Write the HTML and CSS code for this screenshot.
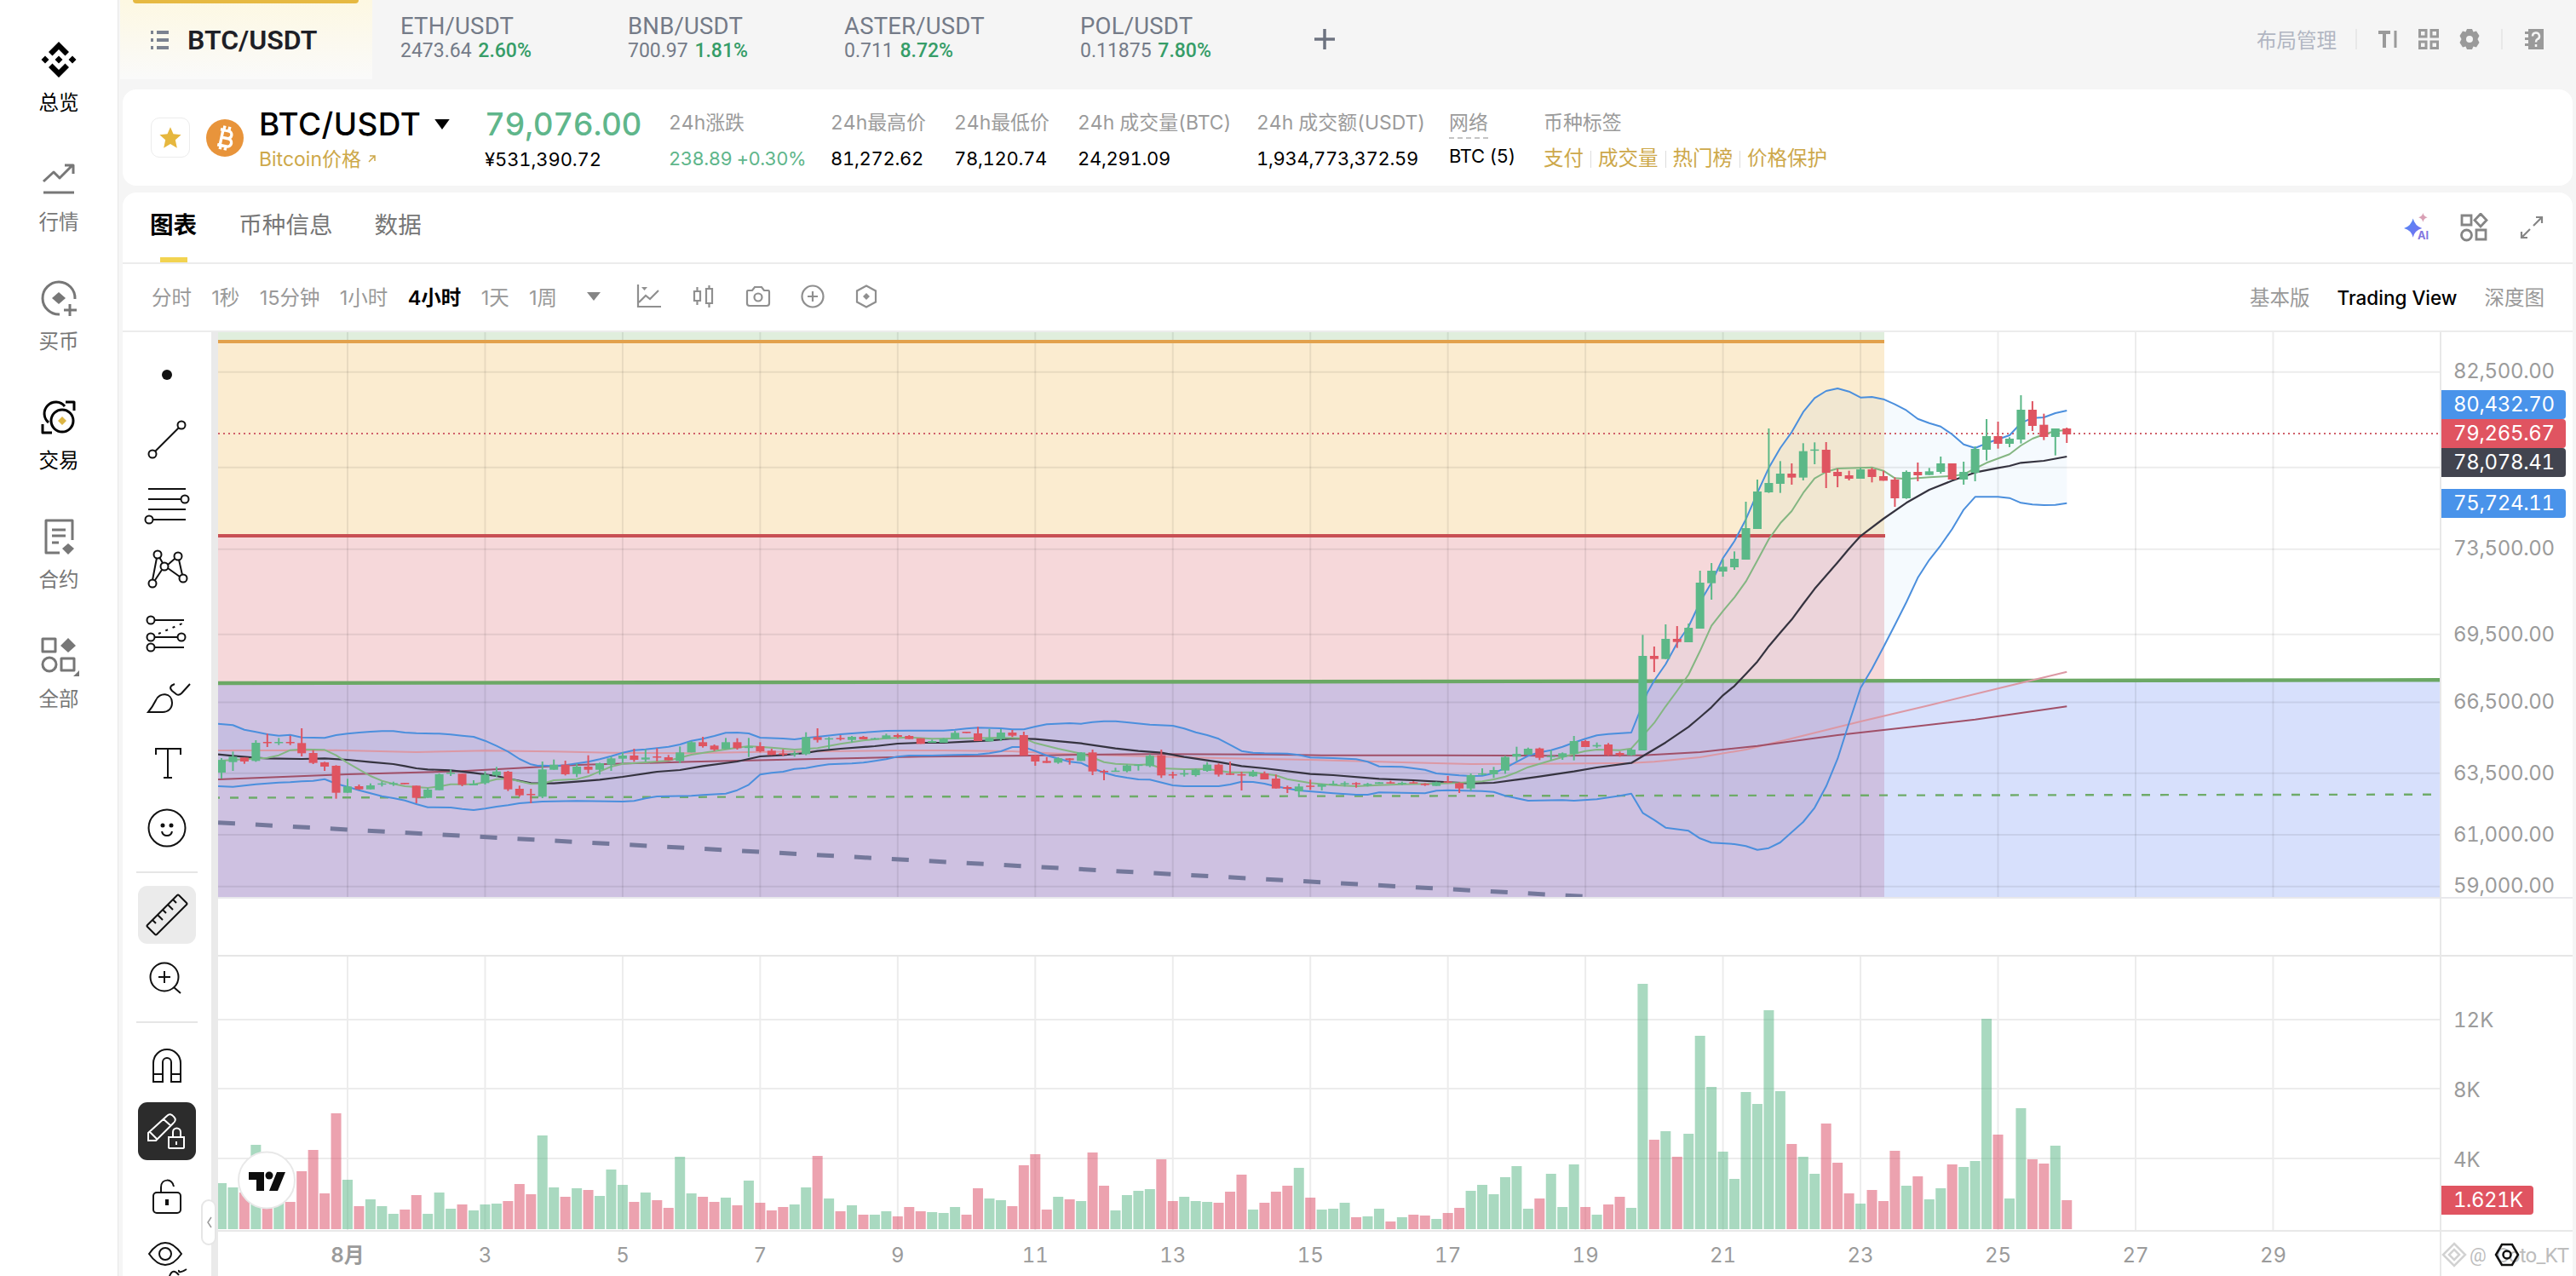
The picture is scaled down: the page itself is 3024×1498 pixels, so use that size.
FILE: index.html
```html
<!DOCTYPE html>
<html lang="zh-CN">
<head>
    <meta charset="UTF-8">
    <meta name="viewport" content="width=device-width, initial-scale=1.0">
    <title>BTC/USDT</title>
    <link rel="stylesheet" href="styles.css">
</head>
<body>
    <nav class="side-nav">
        <a class="nav-item active">
            <svg class="nav-icon" viewBox="-24 -24 48 48"><g fill="currentColor"><path d="M0-21 12-9 7.500-4.500 0-12-7.500-4.500-12-9zM0 21 12 9 7.500 4.500 0 12-7.500 4.500-12 9zM0-4.500 4.500 0 0 4.500-4.500 0zM-16-4.500-11.500 0-16 4.500-20.500 0zM16-4.500 20.500 0 16 4.500 11.500 0z"/></g></svg>
            <span>总览</span>
        </a>
        <a class="nav-item">
            <svg class="nav-icon" viewBox="-24 -24 48 48"><path class="ln" d="M-18 3-6-8 1-1 16-16M7-16H17V-6M-18 16H18"/></svg>
            <span>行情</span>
        </a>
        <a class="nav-item">
            <svg class="nav-icon" viewBox="-24 -24 48 48"><path class="ln" d="M1 19A19 19 0 1 1 19 1M13 7V21M6 14H21"/><path fill="currentColor" d="M0-7 8 0 0 7-8 0z"/></svg>
            <span>买币</span>
        </a>
        <a class="nav-item active">
            <svg class="nav-icon" viewBox="-24 -24 48 48"><path class="ln" d="M-12 6A13.500 13.500 0 1 1 7-13M8-18H18V-8M-19 8V18H-8"/><circle class="ln" cx="4" cy="4" r="13"/><path fill="#dcb544" d="M4-1 9 4 4 9-1 4z"/></svg>
            <span>交易</span>
        </a>
        <a class="nav-item">
            <svg class="nav-icon" viewBox="-24 -24 48 48"><path class="ln" d="M1 19H-15V-19H16V4M-8-8H8M-8-1H8M-8 7H0"/><path fill="currentColor" d="M11 8 18 14 11 21 4 14z"/></svg>
            <span>合约</span>
        </a>
        <a class="nav-item">
            <svg class="nav-icon" viewBox="-24 -24 48 48"><path class="ln" d="M-19-20H-4V-5H-19zM3 3H18V17H3z"/><circle class="ln" cx="-11" cy="10" r="8"/><path fill="currentColor" d="M11-21 20-12 11-4 2-12zM24 17V24H17z"/></svg>
            <span>全部</span>
        </a>
    </nav>

    <main class="main">
        <header class="top-tabs">
            <div class="top-tab current">
                <svg width="24" height="24" viewBox="0 0 24 24" fill="#7b8290"><path d="M1 1h3v4H1zM8 1h14v4H8zM1 10h3v4H1zM8 10h14v4H8zM1 19h3v4H1zM8 19h14v4H8z"/></svg>
                <b>BTC/USDT</b>
            </div>
            <div class="top-tab"><p>ETH/USDT</p><small>2473.64 <i>2.60%</i></small></div>
            <div class="top-tab"><p>BNB/USDT</p><small>700.97 <i>1.81%</i></small></div>
            <div class="top-tab"><p>ASTER/USDT</p><small>0.711 <i>8.72%</i></small></div>
            <div class="top-tab"><p>POL/USDT</p><small>0.11875 <i>7.80%</i></small></div>
            <div class="top-tab plus"><svg width="24" height="24" viewBox="0 0 24 24"><path d="M12 0V24M0 12H24" stroke="#6d7380" stroke-width="3.500"/></svg></div>
            <div class="top-tools">
                <span>布局管理</span>
                <i class="sep"></i>
                <svg class="tool-ti" width="22" height="24" viewBox="0 0 22 24"><path d="M0 4H14M7 4V22" stroke="#9a9a9a" stroke-width="4" fill="none"/><path d="M20 2V22" stroke="#9a9a9a" stroke-width="3"/></svg>
                <svg class="tool-grid" width="24" height="24" viewBox="0 0 24 24"><path d="M1.500 1.500h7.500v7.500h-7.500zM15 1.500h7.500v7.500H15zM1.500 15h7.500v7.500h-7.500zM15 15h7.500v7.500H15z" stroke="#9a9a9a" stroke-width="3" fill="none"/></svg>
                <svg class="tool-gear" width="24" height="24" viewBox="-12 -12 24 24"><path fill="#9a9a9a" fill-rule="evenodd" d="M-3-12H3L4.500-8.500 8-9.500 11.500-4 9.500 0 11.500 4 8 9.500 4.500 8.500 3 12H-3L-4.500 8.500-8 9.500-11.500 4-9.500 0-11.500-4-8-9.500-4.500-8.500zM0-4A4 4 0 1 0 0 4 4 4 0 0 0 0-4z"/></svg>
                <i class="sep last-sep"></i>
                <svg class="tool-help" width="22" height="24" viewBox="0 0 22 24"><path fill="#9a9a9a" d="M4 0H22V24H4zM0 3H8V6H0zM0 10H8V13H0zM0 17H8V20H0z"/><path d="M9 8.500a4 4 0 1 1 5.500 3.700q-1.500.8-1.500 3.300M13 18V21" fill="none" stroke="#f5f5f5" stroke-width="2.500"/></svg>
            </div>
        </header>

        <section class="card ticker">
            <div class="star"><svg width="28" height="28" viewBox="0 0 24 24"><path fill="#e6b73e" d="M12 1l3 7 7.800.8-5.800 5.200 1.700 8L12 18l-6.700 4 1.700-8L1.200 8.800 9 8z"/></svg></div>
            <svg class="coin" width="44" height="44" viewBox="-22 -22 44 44"><circle r="22" fill="#e8943b"/><g transform="rotate(12)" fill="none" stroke="#fff" stroke-width="3.400"><path d="M-7-9H2.500a4.500 4.500 0 0 1 0 9H-4H4a4.700 4.700 0 0 1 0 9.400H-7M-4-9V9M-3-14V-9M3-14V-9M-3 9V14M3 9V14"/></g></svg>
            <div class="pair">
                <h1>BTC/USDT <svg width="20" height="12" viewBox="0 0 18 11"><path d="M1 0H17L9 11z"/></svg></h1>
                <a>Bitcoin价格 <svg width="9" height="9" viewBox="0 0 9 9"><path d="M1 8 8 1M2 1H8V7" fill="none" stroke="#cda84a" stroke-width="1.500"/></svg></a>
            </div>
            <div class="last"><strong>79,076.00</strong><span>¥531,390.72</span></div>
            <dl class="stats">
                <div><dt>24h涨跌</dt><dd class="up">238.89 +0.30%</dd></div>
                <div><dt>24h最高价</dt><dd>81,272.62</dd></div>
                <div><dt>24h最低价</dt><dd>78,120.74</dd></div>
                <div><dt>24h 成交量(BTC)</dt><dd>24,291.09</dd></div>
                <div><dt>24h 成交额(USDT)</dt><dd>1,934,773,372.59</dd></div>
                <div class="network"><dt><u>网络</u></dt><dd>BTC (5)</dd></div>
                <div><dt>币种标签</dt><dd class="tags"><a>支付</a><a>成交量</a><a>热门榜</a><a>价格保护</a></dd></div>
            </dl>
        </section>

        <section class="card chart-card">
            <div class="chart-tabs">
                <a class="on">图表</a><a>币种信息</a><a>数据</a>
                <div class="chart-actions">
                    <svg width="32" height="34" viewBox="0 0 30 32"><defs><linearGradient id="ai" x2="1" y2="1"><stop offset="0" stop-color="#4f8df5"/><stop offset="1" stop-color="#7a6cf0"/></linearGradient></defs><path fill="url(#ai)" d="M10 6q2 8 10 11-8 2-10 10-2-8-10-10 8-3 10-11z"/><path fill="#d9a0b5" d="M21 0q1 4 5 5-4 1-5 5-1-4-5-5 4-1 5-5z"/><text x="15" y="29" font-size="12" font-weight="700" fill="#8277e0">AI</text></svg>
                    <svg width="34" height="34" viewBox="0 0 34 34" fill="none" stroke="#858585" stroke-width="2.800"><path d="M3 3H14V14H3zM25 1 32 8.500 25 16 18 8.500zM20 20H31V31H20z"/><circle cx="8.500" cy="26" r="6"/></svg>
                    <svg width="28" height="28" viewBox="0 0 28 28" fill="none" stroke="#858585" stroke-width="2.200"><path d="M16 12 26 2M19 2H26V9M12 16 2 26M2 19V26H9"/></svg>
                </div>
            </div>
            <div class="intervals">
                <a>分时</a><a>1秒</a><a>15分钟</a><a>1小时</a><a class="on">4小时</a><a>1天</a><a>1周</a>
                <svg width="16" height="10" viewBox="0 0 16 10"><path d="M0 0H16L8 10z" fill="#858585"/></svg>
                <div class="interval-icons">
                    <svg width="30" height="28" viewBox="0 0 30 28"><path d="M2 0V26H29M3 21 11 13 16 17 26 7"/><path d="M6 3H13L9.500 7z" fill="#8f8f8f" stroke="none"/></svg>
                    <svg width="28" height="28" viewBox="0 0 28 28"><path d="M3 8H10V19H3zM6.500 3V8M6.500 19V24M17 5H24V22H17zM20.500 1V5M20.500 22V27"/></svg>
                    <svg width="30" height="28" viewBox="0 0 30 28"><path d="M3 7H8L11 3H19L22 7H27Q28 7 28 9V22Q28 25 25 25H5Q2 25 2 22V9Q2 7 3 7z"/><circle cx="15" cy="15" r="4.500"/></svg>
                    <svg width="28" height="28" viewBox="0 0 28 28"><circle cx="14" cy="14" r="12.500"/><path d="M14 8V20M8 14H20"/></svg>
                    <svg width="28" height="28" viewBox="0 0 28 28"><path d="M14 1.500 25 7.500V20.500L14 26.500 3 20.500V7.500z"/><path d="M14 10 18 14 14 18 10 14z" fill="#8f8f8f" stroke="none"/></svg>
                </div>
                <div class="views"><a>基本版</a><a class="on">Trading View</a><a>深度图</a></div>
            </div>

            <div class="chart-body">
                <aside class="draw-tools">
                    <svg class="tool" viewBox="-38 -38 76 76"><circle r="6" fill="#111" stroke="none"/></svg>
                    <svg class="tool" viewBox="-38 -38 76 76"><path d="M-14 14 14-14"/><circle cx="-17" cy="17" r="4.500"/><circle cx="17" cy="-17" r="4.500"/></svg>
                    <svg class="tool" viewBox="-38 -38 76 76"><path d="M-22-18H22M-22-6H16M-22 6H22M-16 18H22"/><circle cx="21" cy="-6" r="4.500"/><circle cx="-21" cy="18" r="4.500"/></svg>
                    <svg class="tool" viewBox="-38 -38 76 76"><path d="M-17 13-12-13M-14 13-6 1M-9-14-5-7M1-5 9-12M1-1 15 9M14-11 18 7"/><circle cx="-11" cy="-17" r="4.500"/><circle cx="13" cy="-15" r="4.500"/><circle cx="-3" cy="-3" r="4.500"/><circle cx="-17" cy="17" r="4.500"/><circle cx="19" cy="11" r="4.500"/></svg>
                    <svg class="tool" viewBox="-38 -38 76 76"><path d="M-14-16H20M-14 4H12M-14 16H20"/><path d="M-10 0 18-12" stroke-dasharray="3 6"/><circle cx="-19" cy="-16" r="4.500"/><circle cx="-19" cy="4" r="4.500"/><circle cx="17" cy="4" r="4.500"/><circle cx="-19" cy="16" r="4.500"/></svg>
                    <svg class="tool" viewBox="-38 -38 76 76"><path d="M-22 16Q-17 10-13 2C-9-8 6-7 6 5 6 12 1 16-5 16zM9-17Q1-14 6-9L11-5Q14-3 17-6L27-17"/></svg>
                    <svg class="tool" viewBox="-38 -38 76 76"><path d="M-13-10V-17H16V-10M1-17V17M-4 17H6"/></svg>
                    <svg class="tool" viewBox="-38 -38 76 76"><circle r="21.500"/><path d="M-6 4Q-5 9 0 9 5 9 6 4"/><circle cx="-5" cy="-3" r="1.500" fill="#111"/><circle cx="5" cy="-3" r="1.500" fill="#111"/></svg>
                    <hr>
                    <div class="tool-btn ruler"><svg viewBox="-34 -34 68 68"><path d="M-23 12 12-23Q13-24 14-23L23-14Q24-13 23-12L-12 23Q-13 24-14 23L-23 14Q-24 13-23 12zM-17 6-13 10M-11 0-5 6M-5-6-1-2M1-12 7-6M7-18 11-14"/></svg></div>
                    <svg class="tool zoom" viewBox="-38 -38 76 76"><circle cx="-3" cy="-1" r="16.500"/><path d="M-10-1H4M-3-8V6M8 11 16 18"/></svg>
                    <hr>
                    <svg class="tool magnet" viewBox="-38 -38 76 76"><path d="M-16 19V-3a16 16 0 0 1 32 0V19H5V-4a5 5 0 0 0-10 0V19zM-16 10H-5M5 10H16"/></svg>
                    <div class="tool-btn dark"><svg viewBox="-34 -34 68 68"><path d="M-22 2 0-18Q4-22 8-17 12-13 7-9L-13 11H-22zM-4-14 5-6M-20 1-11 10M2 7H20V19Q20 20 18 20H4Q2 20 2 19zM7 7V1a4.500 4.500 0 0 1 9 0V7M11 12V16"/></svg></div>
                    <svg class="tool unlock" viewBox="-38 -38 76 76"><rect x="-16" y="-5" width="32" height="24" rx="4"/><path d="M-7-5V-11C-7-22 7-22 8-12"/><rect x="-1" y="4" width="2" height="5" fill="#111"/></svg>
                    <svg class="tool eye" viewBox="-38 -38 76 76"><path d="M-21-1Q-12-14-2-14 8-14 17-1 8 12-2 12-12 12-21-1z"/><circle cx="-2" cy="-1" r="7"/><path d="M3 25Q7 15 14 24M14 18Q13 23 23 17"/></svg>
                    <span class="collapse"><svg width="8" height="14" viewBox="0 0 8 14"><path d="M6 1 2 7 6 13" fill="none" stroke="#999" stroke-width="1.500"/></svg></span>
                </aside>
                <svg id="chart" viewBox="256 390 2764 1108"></svg>
            </div>
        </section>
    </main>

    <script src="script.js"></script>
</body>
</html>
```
FILE: styles.css
```css
* {
    box-sizing: border-box;
}
body {
    margin: 0;
    width: 3024px;
    height: 1498px;
    overflow: hidden;
    display: flex;
    background-color: #f5f5f5;
    font-family: Inter, "Noto Sans CJK SC", sans-serif;
    font-size: 23.5px;
    color: #000;
}
h1, p, dl, dd {
    margin: 0;
}
i {
    font-style: normal;
}
svg {
    display: block;
    flex: none;
}

/* left navigation */
.side-nav {
    width: 139px;
    flex: none;
    background-color: #fff;
    border-right: 1px solid #e8e8e8;
}
.nav-item {
    height: 140px;
    padding-top: 46px;
    display: flex;
    flex-direction: column;
    align-items: center;
    gap: 12px;
    line-height: 30px;
    color: #777;
}
.nav-item.active {
    color: #000;
}
.nav-icon {
    width: 48px;
    height: 48px;
}
.ln {
    fill: none;
    stroke: currentColor;
    stroke-width: 3;
    stroke-linejoin: round;
}

/* symbol tabs */
.main {
    flex: 1;
    min-width: 0;
    display: flex;
    flex-direction: column;
}
.top-tabs {
    height: 105px;
    padding-left: 2px;
    display: grid;
    grid-template-columns: 296px 267px 254px 277px 275px 100px 1fr;
    font-family: Roboto, "Noto Sans CJK SC", sans-serif;
    color: #747b88;
}
.top-tab {
    padding: 14px 0 0 33px;
}
.top-tab p {
    font-size: 27.5px;
    line-height: 33px;
    letter-spacing: .2px;
}
.top-tab small {
    display: block;
    font-size: 23px;
    line-height: 26px;
    word-spacing: 2px;
}
.top-tab i {
    color: #369d68;
    font-weight: 500;
}
.top-tab.current {
    position: relative;
    height: 93px;
    padding: 0 0 0 35px;
    display: flex;
    align-items: center;
    gap: 20px;
    background: linear-gradient(#fdf8e2, #fafafa);
    color: #1e2026;
}
.top-tab.current::before {
    content: "";
    position: absolute;
    top: 0;
    left: 15px;
    width: 265px;
    height: 4px;
    border-radius: 0 0 4px 4px;
    background-color: #e6b941;
}
.top-tab b {
    font-size: 32px;
    font-weight: 600;
}
.top-tab.plus {
    padding-top: 34px;
}
.top-tools {
    height: 92px;
    padding-right: 38px;
    display: flex;
    justify-content: flex-end;
    align-items: center;
    color: #b1b6c2;
}
.sep {
    width: 2px;
    height: 24px;
    margin: 0 25px 0 22px;
    background-color: #e8e8e8;
}
.last-sep {
    margin: 0 26px 0 25px;
}
.tool-grid {
    margin: 0 24px 0 25px;
}

/* ticker */
.card {
    margin-left: 5px;
    margin-right: 4px;
    background-color: #fff;
    border-radius: 16px;
}
.ticker {
    height: 113px;
    padding-left: 33px;
    display: flex;
    align-items: center;
    font-variant-numeric: tabular-nums;
}
.star {
    width: 46px;
    height: 47px;
    display: flex;
    align-items: center;
    justify-content: center;
    border: 1px solid #ececec;
    border-radius: 10px;
}
.coin {
    margin: 0 18px 0 19px;
}
.pair {
    width: 265px;
    padding-top: 4px;
}
.pair h1, .last strong {
    display: flex;
    align-items: center;
    gap: 15px;
    font-size: 37px;
    font-weight: 500;
    line-height: 46px;
}
.pair h1 {
    letter-spacing: .4px;
}
.pair a {
    display: flex;
    align-items: center;
    gap: 8px;
    line-height: 36px;
    font-size: 23px;
    color: #cda84a;
}
.last {
    width: 216px;
    padding-top: 4px;
}
.last strong {
    letter-spacing: -.4px;
    color: #5fb68b;
}
.last span {
    display: block;
    font-size: 22px;
    line-height: 36px;
    letter-spacing: -.1px;
}
.stats {
    padding-top: 6px;
    display: grid;
    grid-template-columns: 190px 145px 145px 210px 226px 111px auto;
}
.stats dt {
    line-height: 42px;
    font-size: 22.9px;
    color: #9b9b9b;
    white-space: nowrap;
}
.stats dd {
    line-height: 42px;
    font-size: 22px;
    letter-spacing: -.3px;
    white-space: nowrap;
}
.stats .up {
    color: #5fb68b;
    letter-spacing: -.5px;
}
.stats u {
    display: inline-block;
    height: 40px;
    line-height: 42px;
    text-decoration: none;
    border-bottom: 2px dashed #c4c4c4;
}
.network dt {
    height: 42px;
}
.network dd {
    margin-top: -3px;
}
.tags {
    display: flex;
    color: #cda84a;
}
.stats .tags {
    letter-spacing: 0;
}
.tags a {
    font-size: 23.5px;
}
.tags a + a::before {
    content: "";
    display: inline-block;
    width: 1px;
    height: 20px;
    margin: 0 8px;
    vertical-align: -3px;
    background-color: #ddd;
}

/* chart header */
.chart-card {
    flex: 1;
    margin-top: 8px;
    border-radius: 16px 16px 0 0;
}
.chart-tabs {
    height: 84px;
    padding: 0 34px 0 32px;
    display: flex;
    gap: 49px;
    line-height: 76px;
    font-size: 27.6px;
    color: #777;
    border-bottom: 2px solid #ececec;
}
.chart-tabs a.on {
    position: relative;
    font-weight: 600;
    color: #000;
}
.chart-tabs a.on::after {
    content: "";
    position: absolute;
    left: 12px;
    bottom: 0;
    width: 32px;
    height: 6px;
    background-color: #f2d350;
}
.chart-actions {
    margin-left: auto;
    display: flex;
    align-items: center;
    gap: 37px;
}
.chart-actions svg:first-child {
    margin-right: -4px;
}
.intervals {
    height: 80px;
    padding: 0 33px 2px 34px;
    display: flex;
    align-items: center;
    gap: 23.3px;
    color: #999;
    border-bottom: 2px solid #ececec;
}
.intervals .on {
    color: #000;
    font-weight: 600;
}
.intervals > svg {
    margin-left: 12px;
}
.interval-icons {
    margin-left: 18px;
    display: flex;
    gap: 35px;
}
.interval-icons svg {
    fill: none;
    stroke: #8f8f8f;
    stroke-width: 2.2;
}
.views {
    margin-left: auto;
    display: flex;
    align-items: baseline;
    gap: 32px;
}
.views .on {
    font-weight: 500;
    font-size: 22.5px;
}

/* chart */
.chart-body {
    height: 1108px;
    display: flex;
}
.draw-tools {
    position: relative;
    width: 112px;
    height: 1108px;
    padding: 12px 8px 0 0;
    display: flex;
    flex-direction: column;
    align-items: center;
    overflow: hidden;
    box-shadow: inset -8px 0 #eaeaea;
}
.draw-tools svg {
    fill: none;
    stroke: #111;
    stroke-width: 2;
}
.tool {
    width: 76px;
    height: 76px;
}
.draw-tools hr {
    width: 72px;
    margin: 13px 0 0;
    border: 0;
    border-top: 2px solid #e6e6e6;
}
.tool-btn {
    width: 68px;
    height: 68px;
    flex: none;
    border-radius: 11px;
}
.ruler {
    margin-top: 15px;
    background-color: #ebebeb;
}
.zoom {
    margin-top: 2px;
}
.magnet {
    margin-top: 12px;
}
.dark {
    margin-top: 5px;
    background-color: #2c2c2c;
}
.draw-tools .dark svg {
    stroke: #fff;
}
.unlock {
    margin-top: 5px;
}
.eye {
    margin-top: -8px;
}
.collapse {
    position: absolute;
    top: 1018px;
    right: 2px;
    width: 18px;
    height: 54px;
    display: flex;
    align-items: center;
    padding-left: 4px;
    background-color: #fff;
    border: 2px solid #e6e6e6;
    border-radius: 10px;
}
#chart {
    width: 2764px;
    height: 1108px;
    font-size: 24px;
    font-variant-numeric: tabular-nums;
}
.axis {
    fill: #9b9b9b;
}
.tag-text {
    fill: #fff;
}
.watermark {
    fill: #bdbdbd;
    font-family: Roboto, sans-serif;
}
```
FILE: script.js
```js
const chart = document.getElementById('chart');
const LEFT = 256, RIGHT = 2864, ZONE = 2212;
const UP = '#5cb888', DOWN = '#df5461';

// x of a 4h bar, bar 0 is August 1st
const bx = i => 408 + i * 13.455;
// y of a price sample, samples are thirds of a pixel
const py = v => 780 + v / 3;
const vy = v => 1100 + v / 3;

// high, body top, body bottom, low, starting at bar -11 (u = up, d = down)
const candles = `330,337,381,402u 307,325,344,375u 328,328,342,350d 267,276,340,343u 244,273,277,291d 259,273,277,284u 251,273,277,284d 225,277,313,324d 302,312,347,351d 343,345,360,375d 355,357,452,473d
403,430,452,452u 423,429,440,442d 419,426,440,440u 412,419,423,430u 413,418,421,428u 417,417,422,422d 427,427,470,489d 435,441,470,470u 384,387,443,443u 370,381,385,393u
385,385,424,429d 408,420,426,426u 377,388,418,423u 361,377,391,397u 375,378,440,446d 427,438,461,466d 438,456,460,489d 342,370,466,471u 335,353,371,371u 339,353,387,391d
349,360,386,397u 320,360,371,384d 346,348,371,388u 324,331,353,375u 310,321,332,347u 297,321,336,343d 299,328,335,343u 295,324,328,342d 319,327,338,338d 289,310,340,348u
270,274,310,310u 255,274,288,293d 282,286,300,305d 259,274,298,298u 260,274,295,300d 259,290,293,326u 274,288,306,310d 297,304,319,319d 299,313,318,323d 305,313,316,325u
239,256,316,320u 225,256,266,275d 256,260,264,297u 249,259,263,268d 252,255,266,275u 252,255,264,264d 258,260,264,264u 244,250,262,262u 244,249,255,260d 249,252,263,263d
260,260,280,280d 265,270,276,276u 259,262,276,276u 234,241,263,263u 237,237,242,242d 220,243,270,270d 227,260,271,271u 228,240,263,270u 231,240,251,256d 237,249,321,321d
318,320,342,357d 326,340,347,347d 327,331,346,350u 330,331,337,353d 309,310,340,340u 300,310,377,390d 371,375,380,408d 364,374,378,378u 352,356,376,380u 352,353,357,374u
317,322,358,362u 300,320,391,400d 378,387,391,402d 372,383,388,395u 367,371,390,395u 344,353,375,378u 349,353,388,395d 342,384,389,389d 378,387,391,444d 372,379,394,396u
377,384,405,405d 388,402,437,437d 427,432,438,453d 420,430,447,466u 406,427,431,442d 420,422,431,444u 410,420,424,424u 412,418,422,430u 415,418,422,434d 417,421,426,430u
414,415,421,421u 410,415,419,419d 413,417,421,425u 411,415,419,419d 418,420,425,428d 413,415,428,428u 393,412,415,418d 415,418,437,453d 384,390,437,445u 366,384,388,391u
361,372,387,400u 322,326,374,385u 290,315,325,340u 293,297,318,318u 293,296,329,337d 302,322,325,337u 310,313,326,336u 252,270,315,338u 266,270,291,291d 275,284,289,294u
277,282,319,322d 307,312,319,325d 296,300,320,322u -104,-30,303,303u -63,-30,-19,27d -141,-90,-19,-19u -135,-90,-79,-58d -144,-129,-78,-78u -330,-288,-126,-126u -357,-330,-286,-228u
-371,-344,-327,-309u -398,-372,-342,-333u -573,-480,-369,-369u -651,-609,-477,-477u -831,-639,-606,-604u -716,-672,-636,-604u -708,-672,-658,-633d -779,-751,-658,-648u -782,-757,-753,-705u -783,-756,-675,-621d
-689,-678,-663,-624d -682,-666,-654,-648d -693,-687,-654,-654u -693,-687,-660,-641d -682,-663,-647,-647d -659,-651,-585,-555d -683,-678,-585,-583u -711,-678,-666,-645d -692,-680,-667,-667u -732,-708,-678,-672u
-708,-708,-651,-651d -714,-678,-651,-633u -768,-759,-675,-645u -864,-804,-756,-718u -855,-804,-777,-760d -800,-795,-777,-765u -948,-897,-792,-778u -927,-897,-840,-822d -883,-844,-801,-790d -831,-831,-801,-736u -834,-831,-810,-780d`
    .split(/\s+/).map(c => ({ up: c.endsWith('u'), v: c.slice(0, -1).split(',').map(Number) }));

const volumes = `867u 882u 900d 732u 930d 930u 933d 825d 750d 903d 621d 855u 948d 924u 948u 975u 960d 909d 975u 900u 957u 942d 963u 942u 939u 930d 870d 906d 699u 882u 915d 885u 891d 912u 819u 873u 933d 900u 927d 954d 774u
903u 915d 933d 918u 945d 858u 936d 963d 951d 942u 882u 771d 921u 966d 945u 978d 978u 966u 984d 951d 966d 969u 972u 951u 978d 885d 921u 927u 948d 804d 765d 960d 915u 924d 930u 759d 876d 963u 909u 894u 888u
783d 930d 915u 930u 933u 936d 897d 837d 960u 936d 897d 876d 813u 918d 960u 957u 936u 987d 984u 957u 1002d 987u 978d 981d 993u 972d 954d 894u 873u 906u 846u 807u 957u 921d 834u 951u 801u 951d 978u 942d 915d 954u
165u 714d 684u 774d 693u 348u 528u 756u 852u 546u 588u 258u 543u 729d 774u 834u 657d 795d 903d 939u 891d 930d 753d 876u 843d 924u 885u 801d 810u 789u 288u 696d 921u 603u 783d 798d 735u 927d`
    .split(/\s+/).map(c => ({ up: c.endsWith('u'), v: parseInt(c, 10) }));

// indicator lines: bar,value pairs
const upper = '-11.3,209 -10,214 -9,230 -8,238 -7,246 -6,251 -5,248 -4,257 -2,259 -1,249 0,244 1,240 2,237 3,235 4,235 5,240 6,242 8,244 9,247 10,251 11,255 12,269 13,287 14,307 15,333 16,352 16.6,357 17,356 18,358 19,355 20,349 21,343 22,334 23,323 24,311 25,302 26,299 27,295 28,290 29,282 30,269 31,262 32,252 33,241 34,240 35,243 36,258 38,261 39,264 40,259 41,255 43,246 45,240 47,234 49,233 52,233 53,230 54,226 55,223 57,225 58,229 59,229 60,219 61,211 63,207 64,209 65,203 66,200 67,200 68,204 70,212 72,216 73,226 74,239 75,249 76,262 77,283 78,305 79,311 80,313 82,314 83,319 84,328 86,330 88,334 89,343 90,359 92,361 94,371 95,384 97,391 98,393 99,392 100,383 101,365 102,343 103,322 104,310 105,302 106,290 107,275 108,262 109,250 110,245 112,240 113,140 113.4,100 114,57 115,-1 116,-75 117,-133 118,-219 119,-288 120,-374 121,-434 122,-511 123,-604 124,-692 125,-762 126,-818 127,-889 128,-938 129,-963 130,-972 131,-961 132,-940 133,-942 134,-934 135,-916 136,-895 137,-865 138,-850 139,-838 140,-810 141,-775 142,-762 143,-779 144,-793 145,-807 146,-850 147,-868 148,-870 149,-885 150,-894';
const lower = '-11.3,429 -10,431 -9,427 -8,422 -6,416 -5,415 -4,412 -3,410 -2,404 -1,420 0,431 1,443 2,454 3,464 4,471 5,479 6,492 7,503 9,504 10,509 11,513 12,508 13,501 14,496 15,489 17,483 20,481 24,483 25,481 26,472 27,465 30,463 31,460 33,455 34,443 35,424 36,388 37,382 38,378 39,368 40,365 41,358 42,352 44,349 45,346 47,334 48,325 49,321 51,321 53,319 55,317 56,313 57,306 58,291 59,291 60,305 61,321 63,343 64,347 65,366 66,381 67,392 68,399 69,405 70,406 72,426 73,429 76,429 77,423 78,413 79,414 80,420 81,430 83,444 86,454 88,459 89,459 90,451 94,454 95,445 96,443 99,446 100,449 101,463 103,480 106,478 107,480 109,475 111,463 112,455 113,523 114,548 115,575 117,586 118,613 119,628 121,633 122,640 123,653 124,647 125,627 126,591 127,555 128,505 129,430 130,332 131,206 132,83 133,16 134,-61 135,-139 136,-219 137,-305 138,-368 139,-419 140,-477 141,-545 142,-590 144,-590 145,-586 146,-569 147,-563 148,-561 149,-562 150,-568';
const middle = '-11.3,317 -10,322 -8,329 -7,331 -4,333 -2,331 0,336 2,344 4,351 5,358 6,366 7,370 9,373 11,382 13,393 14,402 16,418 18,419 20,413 22,406 24,396 27,378 29,372 31,358 34,342 36,324 38,319 40,312 41,305 43,297 46,288 48,279 50,276 52,276 54,272 56,268 58,261 60,263 64,278 67,296 69,305 71,311 73,326 76,344 78,358 80,366 84,386 86,390 90,403 93,408 96,415 98,419 100,417 102,406 104,395 107,377 109,363 112,347 113,323 115,275 117,220 118,186 119,151 120,109 121,76 122,34 123,-10 124,-64 125,-112 126,-158 127,-213 128,-266 130,-359 131,-407 132,-452 134,-513 136,-569 138,-615 140,-647 142,-676 144,-692 145,-699 146,-710 148,-717 150,-732';
const fast = '-11.3,340 -9,334 -7,329 -6,320 -5,302 -4,299 -2,301 -1,320 0,347 1,370 2,393 3,410 4,421 5,429 7,435 8,430 9,422 11,422 12,415 13,404 14,402 15,412 16,421 17,420 18,408 20,404 21,394 22,377 23,360 24,350 26,345 28,339 30,318 32,305 34,293 35,288 37,293 39,300 41,295 43,280 45,268 47,260 49,257 51,262 54,260 57,258 59,260 60,277 62,297 64,314 65,328 66,344 67,350 69,354 70,352 71,366 73,369 75,368 77,380 79,380 81,391 82,404 83,411 84,418 86,425 88,429 90,425 92,422 95,420 97,417 99,412 100,405 101,395 102,380 103,362 105,338 107,315 108,305 109,300 111,302 112,296 113.5,229 114,206 115,148 116,93 117,36 118,-47 119,-136 120,-188 121,-236 122,-292 123,-366 124,-441 125,-497 126,-540 127,-604 128,-655 129,-678 130,-690 133,-694 134,-682 135,-656 136,-653 138,-659 140,-664 141,-669 142,-690 143,-710 145,-740 146,-771 147,-795 148,-810 149,-822 150,-825';
const slow = '-11.3,303 -1,302 6,309 12,304 18,307 23,311 30,313 36,308 48,303 52,303 58,306 62,314 68,322 76,330 84,336 92,345 98,351 104,350 110,348 112,347 114,343 118,327 122,300 126,261 132,201 138,144 144,85 150,26';
const slowest = '-11.3,405 0,387 10,376 20,354 30,343 40,334 50,325 60,321 64,318 70,316 80,317 85,320 95,320 105,322 112,320 113,320 118,309 123,287 130,249 136,222 142,194 150,148';

const points = s => s.split(' ').map(p => {
    const [i, v] = p.split(',').map(Number);
    return bx(i).toFixed(1) + ',' + py(v).toFixed(1);
});
const rect = (x, y, w, h, fill, extra = '') => `<rect x="${x}" y="${y}" width="${w}" height="${h}" fill="${fill}" ${extra}/>`;
const line = (x1, y1, x2, y2, stroke, w = 2, extra = '') => `<line x1="${x1}" y1="${y1}" x2="${x2}" y2="${y2}" stroke="${stroke}" stroke-width="${w}" ${extra}/>`;
const curve = (s, stroke, w = 2) => `<polyline points="${points(s).join(' ')}" fill="none" stroke="${stroke}" stroke-width="${w}" stroke-linejoin="round"/>`;

let out = '<clipPath id="pane"><rect x="256" y="390" width="2608" height="663"/></clipPath>';

// price zones
out += rect(LEFT, 390, ZONE - LEFT, 11, '#e0eedd');
out += rect(LEFT, 401, ZONE - LEFT, 228, '#fbecd0');
out += rect(LEFT, 629, ZONE - LEFT, 172, '#f6d8da');
out += rect(LEFT, 801, ZONE - LEFT, 252, '#cec1e1');
out += rect(ZONE, 799, RIGHT - ZONE, 254, '#d7e0fc');

// Bollinger band background
out += `<polygon points="${points(upper).join(' ')} ${points(lower).reverse().join(' ')}" fill="#2196f3" fill-opacity=".045"/>`;

// grid
const GRID = 'rgba(0,0,0,.075)';
[436.7, 548.8, 644.7, 744.7, 824.6, 907.7, 980, 1040.7].forEach(y => out += line(LEFT, y, RIGHT, y, GRID));
[1197, 1278, 1360].forEach(y => out += line(LEFT, y, RIGHT, y, '#ececec'));
for (let k = 0; k < 15; k++) {
    const x = bx(k * 12);
    out += line(x, 390, x, 1053, GRID) + line(x, 1122, x, 1445, '#ececec');
}
out += line(LEFT, 1054, 3020, 1054, '#e8e8ec') + line(LEFT, 1122, 3020, 1122, '#e6e6e6') + line(LEFT, 1445, 3020, 1445, '#e8e8e8');
out += line(2865, 390, 2865, 1498, '#e8e8e8');

// drawn levels
out += '<g clip-path="url(#pane)">';
out += line(LEFT, 401, ZONE, 401, '#e2a14c', 4);
out += line(LEFT, 629, ZONE + 1, 629, '#c84f54', 4);
out += line(LEFT, 802, RIGHT, 798.3, '#6ba865', 4.4);
out += line(LEFT, 936.5, RIGHT, 932.7, '#6eab69', 2.4, 'stroke-dasharray="10 12" stroke-dashoffset="8"');
out += line(LEFT, 965.7, 1862, 1052.5, '#74789b', 5, 'stroke-dasharray="20 24"');
out += line(LEFT, 509, RIGHT, 509, '#d0606a', 2, 'stroke-dasharray="2 4"');
out += curve(slow, '#dc98a4');
out += curve(slowest, '#a05068');
out += curve(upper, '#4b8fdd') + curve(lower, '#4b8fdd') + curve(middle, '#35333f', 2.2) + curve(fast, '#84b682');

candles.forEach((c, n) => {
    const x = bx(n - 11), [h, t, b, l] = c.v, color = c.up ? UP : DOWN;
    out += line(x, py(h), x, py(l), color);
    out += rect(x - 5, py(t), 10, Math.max((b - t) / 3, 1.5), color);
});
out += '</g>';

volumes.forEach((c, n) => {
    const x = Math.max(bx(n - 11) - 6, LEFT);
    out += rect(x, vy(c.v), bx(n - 11) + 6 - x, 1443 - vy(c.v), c.up ? UP : '#dc5068', 'fill-opacity=".53"');
});

// axes
const label = (x, y, s, cls = 'axis', extra = '') => `<text x="${x}" y="${y}" class="${cls}" ${extra}>${s}</text>`;
[[435, '82,500.00'], [643, '73,500.00'], [743.6, '69,500.00'], [823, '66,500.00'], [906.6, '63,500.00'], [978.6, '61,000.00'], [1039, '59,000.00'], [1197, '12K'], [1279, '8K'], [1361, '4K']]
    .forEach(([y, s]) => out += label(2880, y + 9, s, 'axis', s.length > 4 ? 'textLength="119"' : ''));
const tag = (y, w, s, fill) => `<path d="M2866 ${y}h${w - 4}q4 0 4 4v26q0 4-4 4h-${w - 4}z" fill="${fill}"/>` + label(2880, y + 25, s, 'tag-text', `textLength="${w > 120 ? 119 : 82}"`);
out += tag(458, 146, '80,432.70', '#4993ea') + tag(492, 146, '79,265.67', '#e05461') + tag(526, 146, '78,078.41', '#42444f');
out += tag(574, 146, '75,724.11', '#4993ea') + tag(1392, 108, '1.621K', '#e05461');
out += label(bx(0), 1482, '8月', 'axis', 'text-anchor="middle" font-weight="600"');
for (let k = 1; k < 15; k++) {
    out += label(bx(k * 12), 1482, 1 + k * 2, 'axis', 'text-anchor="middle"');
}

// TradingView badge
out += '<circle cx="313" cy="1385.5" r="33" fill="#fff" stroke="#e8e8e8" stroke-width="2"/>';
out += '<path d="M292 1376H310V1398H301V1385H292zM325 1376H335L326 1398H316z" fill="#0d0d0d"/><circle cx="316" cy="1380" r="4.5" fill="#0d0d0d"/>';

// watermark and chart settings
out += '<path d="M2881 1460 2894 1473 2881 1486 2868 1473zM2881 1467 2887 1473 2881 1479 2875 1473z" fill="none" stroke="#d2d2d2" stroke-width="2.5"/>';
out += label(2899, 1481, '@', 'watermark', 'font-size="22"') + label(2930, 1482, 'Coto_KT', 'watermark', 'textLength="86"');
out += '<path d="M2937 1461H2949L2956 1473 2949 1485H2937L2930 1473z" fill="none" stroke="#111" stroke-width="2.5"/><circle cx="2943" cy="1473" r="4.5" fill="none" stroke="#111" stroke-width="2.5"/>';

chart.innerHTML = out;
```
